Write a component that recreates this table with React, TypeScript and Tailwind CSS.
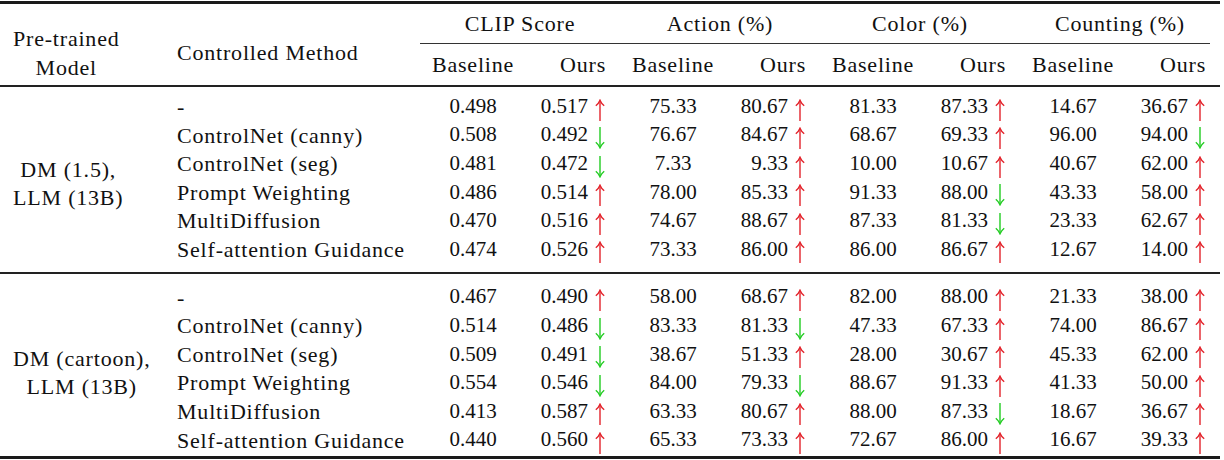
import React from 'react';

type Row = { method: string; vals: string[] };

const groups: { label: [string, string]; rows: Row[] }[] = [
  {
    label: ['DM (1.5),', 'LLM (13B)'],
    rows: [
      { method: '-', vals: ['0.498', '0.517', '75.33', '80.67', '81.33', '87.33', '14.67', '36.67'] },
      { method: 'ControlNet (canny)', vals: ['0.508', '0.492', '76.67', '84.67', '68.67', '69.33', '96.00', '94.00'] },
      { method: 'ControlNet (seg)', vals: ['0.481', '0.472', '7.33', '9.33', '10.00', '10.67', '40.67', '62.00'] },
      { method: 'Prompt Weighting', vals: ['0.486', '0.514', '78.00', '85.33', '91.33', '88.00', '43.33', '58.00'] },
      { method: 'MultiDiffusion', vals: ['0.470', '0.516', '74.67', '88.67', '87.33', '81.33', '23.33', '62.67'] },
      { method: 'Self-attention Guidance', vals: ['0.474', '0.526', '73.33', '86.00', '86.00', '86.67', '12.67', '14.00'] },
    ],
  },
  {
    label: ['DM (cartoon),', 'LLM (13B)'],
    rows: [
      { method: '-', vals: ['0.467', '0.490', '58.00', '68.67', '82.00', '88.00', '21.33', '38.00'] },
      { method: 'ControlNet (canny)', vals: ['0.514', '0.486', '83.33', '81.33', '47.33', '67.33', '74.00', '86.67'] },
      { method: 'ControlNet (seg)', vals: ['0.509', '0.491', '38.67', '51.33', '28.00', '30.67', '45.33', '62.00'] },
      { method: 'Prompt Weighting', vals: ['0.554', '0.546', '84.00', '79.33', '88.67', '91.33', '41.33', '50.00'] },
      { method: 'MultiDiffusion', vals: ['0.413', '0.587', '63.33', '80.67', '88.00', '87.33', '18.67', '36.67'] },
      { method: 'Self-attention Guidance', vals: ['0.440', '0.560', '65.33', '73.33', '72.67', '86.00', '16.67', '39.33'] },
    ],
  },
];

const metrics = ['CLIP Score', 'Action (%)', 'Color (%)', 'Counting (%)'];

// method column + 4 x (baseline, ours)
const rowCols = 'grid grid-cols-[255px_106px_94px_106px_94px_106px_94px_106px_94px]';
const word = 'text-[22px] tracking-[0.8px]';

function Arrow({ up }: { up: boolean }) {
  if (up) {
    return (
      <svg width="12" height="22" viewBox="0 0 12 22" fill="none" stroke="#e3232b" strokeWidth="1.4" className="ml-[6px] translate-y-[3px]">
        <path d="M6 1.5V22" />
        <path d="M1.8 6.8C3.6 5.4 5 3.6 6 1.2C7 3.6 8.4 5.4 10.2 6.8" />
      </svg>
    );
  }
  return (
    <svg width="12" height="22" viewBox="0 0 12 22" fill="none" stroke="#22cc22" strokeWidth="1.4" className="ml-[6px] translate-y-[3px]">
      <path d="M6 0V20.5" />
      <path d="M1.8 15.2C3.6 16.6 5 18.4 6 20.8C7 18.4 8.4 16.6 10.2 15.2" />
    </svg>
  );
}

function Group({ label, rows, pad, labelPad }: { label: [string, string]; rows: Row[]; pad: string; labelPad: string }) {
  return (
    <div className={`flex ${pad}`}>
      <div className={`w-[165px] shrink-0 flex items-center pl-[13px] ${labelPad}`}>
        <div className={`text-center leading-[28px] ${word}`}>
          <div>{label[0]}</div>
          <div>{label[1]}</div>
        </div>
      </div>
      <div className="flex flex-col">
        {rows.map((r) => (
          <div key={r.method} className={`${rowCols} h-[28.6px]`}>
            <div className={`flex items-center pl-[12px] whitespace-nowrap ${word}`}>{r.method}</div>
            {[0, 1, 2, 3].map((m) => {
              const base = r.vals[m * 2];
              const ours = r.vals[m * 2 + 1];
              return (
                <React.Fragment key={m}>
                  <div className="flex items-center justify-center text-[21px]">{base}</div>
                  <div className="flex items-center justify-end pr-[14px] text-[21px]">
                    <span>{ours}</span>
                    <Arrow up={parseFloat(ours) > parseFloat(base)} />
                  </div>
                </React.Fragment>
              );
            })}
          </div>
        ))}
      </div>
    </div>
  );
}

export default function App() {
  return (
    <div className="w-[1224px] h-[460px] bg-white font-[family-name:Liberation_Serif,serif] text-[#111]">
      <div className="w-[1220px] pt-[1px]">
        {/* top rule */}
        <div className="h-[3px] bg-[#1a1a1a]" />

        {/* header */}
        <div className="flex">
          <div className="w-[165px] shrink-0 flex items-center pl-[13px] pt-[16px]">
            <div className={`text-center leading-[29px] ${word}`}>
              <div>Pre-trained</div>
              <div>Model</div>
            </div>
          </div>
          <div className={`w-[255px] shrink-0 flex items-center pl-[12px] pt-[16px] ${word}`}>Controlled Method</div>
          <div className="flex flex-col">
            <div className="grid grid-cols-4 h-[39px]">
              {metrics.map((m) => (
                <div key={m} className={`w-[200px] flex items-center justify-center ${word}`}>
                  {m}
                </div>
              ))}
            </div>
            <div className="h-[1px] mr-[10px] bg-[#333]" />
            <div className="grid grid-cols-[106px_94px_106px_94px_106px_94px_106px_94px] h-[41px]">
              {metrics.map((m) => (
                <React.Fragment key={m}>
                  <div className={`flex items-center justify-center ${word}`}>Baseline</div>
                  <div className={`flex items-center justify-end pr-[14px] ${word}`}>Ours</div>
                </React.Fragment>
              ))}
            </div>
          </div>
        </div>

        <div className="h-[2px] bg-[#222]" />
        <Group label={groups[0].label} rows={groups[0].rows} pad="pt-[3px] pb-[10px]" labelPad="pt-[16px]" />
        <div className="h-[2px] bg-[#222]" />
        <Group label={groups[1].label} rows={groups[1].rows} pad="pt-[7px] pb-[4px]" labelPad="pt-[14px]" />
        <div className="h-[3px] bg-[#1a1a1a]" />
      </div>
    </div>
  );
}
